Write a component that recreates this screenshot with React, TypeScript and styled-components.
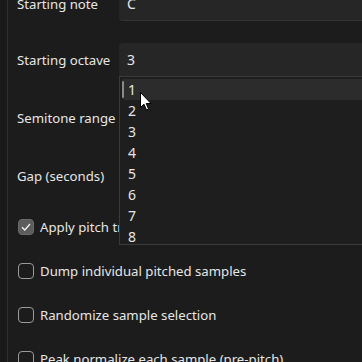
import styled, { createGlobalStyle } from 'styled-components';

const GlobalStyle = createGlobalStyle`
  html, body {
    margin: 0;
    padding: 0;
    width: 362px;
    height: 362px;
    overflow: hidden;
    background: #1c1c1c;
    font-family: "Noto Sans", "Open Sans", sans-serif;
    font-size: 13.2px;
    color: #e6e6e6;
  }
`;

const Page = styled.div`
  display: flex;
  height: 362px;
  overflow: hidden;
`;

const SideStrip = styled.div`
  width: 7px;
  flex: none;
  background: #1a1a1a;
  border-right: 1px solid #2e2e2e;
`;

const Panel = styled.div`
  flex: 1;
  position: relative;
  padding-left: 9px;
`;

const Form = styled.div`
  display: flex;
  flex-direction: column;
  margin-top: -13px;
`;

const FieldRow = styled.div<{ tight?: boolean }>`
  display: grid;
  grid-template-columns: 102px 260px;
  align-items: center;
  height: 34px;
  margin-bottom: ${({ tight }) => (tight ? '22px' : '24px')};
`;

const Label = styled.span`
  white-space: nowrap;
`;

const Combo = styled.div`
  position: relative;
  height: 34px;
  box-sizing: border-box;
  display: flex;
  align-items: center;
  padding-left: 8px;
  font-size: 14px;
  background: #262626;
  border-radius: 4px;
  border-bottom: 1px solid #333333;
`;

const CheckRow = styled.label`
  display: flex;
  align-items: center;
  gap: 6px;
  height: 20px;
  margin-bottom: 24px;
  padding-left: 1px;
  white-space: nowrap;
`;

const Box = styled.span<{ checked?: boolean }>`
  width: 16px;
  height: 16px;
  box-sizing: border-box;
  border-radius: 4px;
  border: 1px solid ${({ checked }) => (checked ? '#6a6a6a' : '#9a9a9a')};
  background: ${({ checked }) => (checked ? '#5c5c5c' : 'transparent')};
  display: flex;
  align-items: center;
  justify-content: center;
  flex: none;
`;

const Popup = styled.div`
  position: absolute;
  top: 100%;
  left: 0;
  width: 100%;
  height: 169px;
  box-sizing: border-box;
  background: #1e1e1e;
  border: 1px solid #3a3a3a;
  padding: 2px 2px 0 2px;
  z-index: 2;
`;

const Item = styled.div<{ active?: boolean }>`
  position: relative;
  height: 21px;
  display: flex;
  align-items: center;
  padding-left: 6px;
  background: ${({ active }) => (active ? '#2c2c2c' : 'transparent')};
  border-radius: 2px;
  &::before {
    content: '';
    display: ${({ active }) => (active ? 'block' : 'none')};
    position: absolute;
    left: 0;
    top: 2px;
    bottom: 2px;
    width: 2px;
    background: #8a8a8a;
    border-radius: 1px;
  }
`;

const Pointer = styled.svg`
  position: absolute;
  left: 132px;
  top: 92px;
  z-index: 3;
`;

const Check = () => (
  <svg width="12" height="12" viewBox="0 0 12 12">
    <path d="M2 6.3 L4.8 9 L10 3" fill="none" stroke="#f2f2f2" strokeWidth="1.3" />
  </svg>
);

const octaves = [1, 2, 3, 4, 5, 6, 7, 8];

const App = () => (
  <>
    <GlobalStyle />
    <Page>
      <SideStrip />
      <Panel>
        <Form>
          <FieldRow tight>
            <Label>Starting note</Label>
            <Combo>C</Combo>
          </FieldRow>
          <FieldRow>
            <Label>Starting octave</Label>
            <Combo>
              3
              <Popup>
                {octaves.map((o) => (
                  <Item key={o} active={o === 1}>
                    {o}
                  </Item>
                ))}
              </Popup>
            </Combo>
          </FieldRow>
          <FieldRow>
            <Label>Semitone range</Label>
            <Combo />
          </FieldRow>
          <FieldRow>
            <Label>Gap (seconds)</Label>
            <Combo />
          </FieldRow>
          <CheckRow>
            <Box checked>
              <Check />
            </Box>
            Apply pitch tracking
          </CheckRow>
          <CheckRow>
            <Box />
            Dump individual pitched samples
          </CheckRow>
          <CheckRow>
            <Box />
            Randomize sample selection
          </CheckRow>
          <CheckRow>
            <Box />
            Peak normalize each sample (pre-pitch)
          </CheckRow>
        </Form>
        <Pointer width="12" height="19" viewBox="0 0 12 19">
          <path d="M0.5 0.5 L0.5 15.5 L4 12.2 L6.5 18 L8.6 17.1 L6.2 11.5 L11 11.5 Z" fill="#ffffff" stroke="#000000" strokeWidth="1" />
        </Pointer>
      </Panel>
    </Page>
  </>
);

export default App;
